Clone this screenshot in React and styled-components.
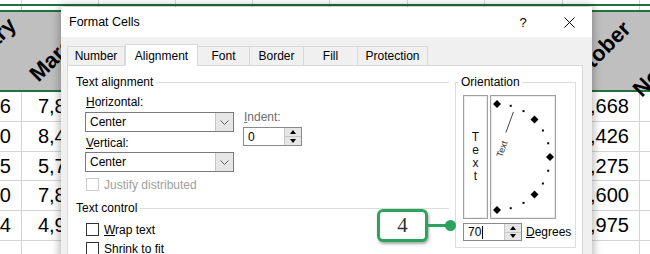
import React from 'react';
import styled, { createGlobalStyle } from 'styled-components';

const GRID = '#d4d4d4';
const GREEN = '#21703f';
const UI = '"Liberation Sans", Arial, sans-serif';

const Global = createGlobalStyle`
  html, body { margin: 0; padding: 0; }
  body {
    width: 650px; height: 254px; overflow: hidden; background: #fff;
    font-family: ${UI};
  }
`;

const Page = styled.div`
  position: relative;
  width: 650px;
  height: 254px;
  overflow: hidden;
`;

/* ---------- spreadsheet ---------- */
const Sheet = styled.div`
  display: flex;
  flex-direction: column;
  margin-left: -55px;
  width: 770px;
`;

const Row = styled.div`
  display: flex;
  height: ${(p) => p.h}px;
  flex: none;
  background: ${(p) => p.bg || '#fff'};
  border-bottom: ${(p) => (p.line ? `1px solid ${GRID}` : 'none')};
  box-sizing: border-box;
`;

const Rule = styled.div`
  height: 2px;
  flex: none;
  background: ${GREEN};
`;

const Cell = styled.div`
  width: ${(p) => p.w}px;
  flex: none;
  box-sizing: border-box;
  border-right: 1px solid ${GRID};
  display: flex;
  align-items: center;
  justify-content: flex-end;
  padding-right: 10px;
  font-family: ${UI};
  font-size: 20px;
  color: #000;
`;

const HeadCell = styled.div`
  width: ${(p) => p.w}px;
  flex: none;
  display: flex;
  align-items: center;
  justify-content: center;
  overflow: visible;
`;

const HeadLabel = styled.span`
  flex: none;
  white-space: nowrap;
  font-family: ${UI};
  font-weight: bold;
  font-size: 22px;
  line-height: 26px;
  color: #000;
  transform: translate(-4px, 4px) rotate(-45deg);
`;

const COLS = [
  { w: 77, head: 'February', vals: ['3,876', '5,410', '2,665', '4,320', '6,204'] },
  { w: 77, head: 'March', vals: ['7,868', '8,452', '5,731', '7,845', '4,993'] },
  { w: 77, head: 'April', vals: ['6,112', '7,204', '4,880', '6,530', '5,118'] },
  { w: 77, head: 'May', vals: ['5,420', '6,905', '3,770', '8,120', '4,415'] },
  { w: 77, head: 'June', vals: ['8,015', '5,330', '6,410', '7,225', '3,960'] },
  { w: 78, head: 'July', vals: ['6,740', '7,815', '5,095', '6,380', '4,540'] },
  { w: 77, head: 'August', vals: ['7,305', '6,120', '4,660', '8,410', '5,730'] },
  { w: 78, head: 'September', vals: ['5,980', '8,045', '6,225', '7,110', '4,305'] },
  { w: 77, head: 'October', vals: ['7,668', '8,426', '5,275', '7,600', '4,975'] },
  { w: 77, head: 'November', vals: ['', '', '', '', ''] },
];

const ROW_H = [30, 30, 29, 30, 30, 30];

function Spreadsheet() {
  return (
    <Sheet>
      <Row h={4}>
        {COLS.map((c, i) => (
          <Cell key={i} w={c.w} />
        ))}
      </Row>
      <Rule />
      <Row h={4}>
        {COLS.map((c, i) => (
          <Cell key={i} w={c.w} />
        ))}
      </Row>
      <Rule />
      <Row h={78} bg="#bfbfbf">
        {COLS.map((c, i) => (
          <HeadCell key={i} w={c.w}>
            <HeadLabel>{c.head}</HeadLabel>
          </HeadCell>
        ))}
      </Row>
      <Rule />
      {ROW_H.map((h, r) => (
        <Row key={r} h={h} line>
          {COLS.map((c, i) => (
            <Cell key={i} w={c.w}>
              {c.vals[r] || ''}
            </Cell>
          ))}
        </Row>
      ))}
    </Sheet>
  );
}

/* ---------- dialog ---------- */
const Dialog = styled.div`
  position: absolute;
  left: 61px;
  top: 7px;
  width: 531px;
  height: 262px;
  background: #f0f0f0;
  box-shadow: 0 0 9px 1px rgba(0, 0, 0, 0.32);
  display: flex;
  flex-direction: column;
  font-family: ${UI};
  font-size: 12px;
  color: #000;
`;

const TitleBar = styled.div`
  height: 30px;
  flex: none;
  background: #fff;
  display: flex;
  align-items: center;
`;

const Title = styled.div`
  flex: 1;
  padding-left: 8px;
  font-size: 12.5px;
`;

const TitleButton = styled.div`
  width: 46px;
  height: 30px;
  display: flex;
  align-items: center;
  justify-content: center;
  font-size: 13px;
`;

const Body = styled.div`
  flex: 1;
  display: flex;
  flex-direction: column;
  padding: 7px 9px 0 6px;
`;

const Tabs = styled.div`
  display: flex;
  align-items: flex-end;
  height: 21px;
  flex: none;
  position: relative;
  z-index: 1;
`;

const Tab = styled.div`
  width: ${(p) => p.w}px;
  height: ${(p) => (p.active ? 22 : 19)}px;
  margin-bottom: ${(p) => (p.active ? -1 : 0)}px;
  box-sizing: border-box;
  display: flex;
  align-items: center;
  justify-content: center;
  background: ${(p) => (p.active ? '#fff' : '#f0f0f0')};
  border: 1px solid #d9d9d9;
  border-bottom: none;
  border-left: ${(p) => (p.first || p.active ? '1px solid #d9d9d9' : 'none')};
  font-size: 12px;
`;

const Panel = styled.div`
  flex: 1;
  background: #fff;
  border: 1px solid #d9d9d9;
  display: grid;
  grid-template-columns: 373px 121px;
  column-gap: 6px;
  align-items: start;
  padding: 9px 6px 0 8px;
`;

const LeftCol = styled.div`
  display: flex;
  flex-direction: column;
`;

const GroupHeader = styled.div`
  display: flex;
  align-items: center;
  height: 14px;
  margin-top: ${(p) => p.mt || 0}px;
  &::after {
    content: '';
    flex: 1;
    height: 1px;
    margin-left: 3px;
    background: #dcdcdc;
  }
`;

const AlignBlock = styled.div`
  display: flex;
  gap: 9px;
  margin-left: 9px;
`;

const FieldCol = styled.div`
  display: flex;
  flex-direction: column;
  padding-top: ${(p) => p.pt || 0}px;
`;

const Label = styled.div`
  height: 14px;
  line-height: 14px;
  margin-top: ${(p) => p.mt || 0}px;
  padding-left: 1px;
  color: ${(p) => (p.disabled ? '#6d6d6d' : '#000')};
`;

const Select = styled.div`
  width: 149px;
  height: 20px;
  margin-top: ${(p) => p.mt || 0}px;
  box-sizing: border-box;
  border: 1px solid #7a7a7a;
  background: #fff;
  display: flex;
`;

const SelectValue = styled.div`
  flex: 1;
  padding-left: 4px;
  display: flex;
  align-items: center;
`;

const SelectButton = styled.div`
  width: 17px;
  background: #e6e6e6;
  border-left: 1px solid #c6c6c6;
  display: flex;
  align-items: center;
  justify-content: center;
`;

const Spin = styled.div`
  width: ${(p) => p.w}px;
  height: ${(p) => p.h}px;
  margin-top: ${(p) => p.mt || 0}px;
  box-sizing: border-box;
  border: 1px solid #8a8a8a;
  background: #fff;
  display: flex;
  flex: none;
`;

const SpinValue = styled.div`
  flex: 1;
  padding-left: 4px;
  display: flex;
  align-items: center;
`;

const Caret = styled.span`
  display: inline-block;
  width: 1px;
  height: 13px;
  background: #000;
  margin-left: 1px;
`;

const SpinButtons = styled.div`
  width: 16px;
  display: flex;
  flex-direction: column;
  border-left: 1px solid #c6c6c6;
`;

const SpinButton = styled.div`
  flex: 1;
  background: #e6e6e6;
  display: flex;
  align-items: center;
  justify-content: center;
  & + & {
    border-top: 1px solid #c6c6c6;
  }
  &::before {
    content: '';
    border-left: 3.5px solid transparent;
    border-right: 3.5px solid transparent;
    ${(p) => (p.down ? 'border-top: 4px solid #000;' : 'border-bottom: 4px solid #000;')}
  }
`;

const CheckRow = styled.div`
  display: flex;
  align-items: center;
  gap: 5px;
  height: 13px;
  margin-top: ${(p) => p.mt || 0}px;
  margin-left: 10px;
  color: ${(p) => (p.disabled ? '#a0a0a0' : '#000')};
`;

const Box = styled.span`
  width: 13px;
  height: 13px;
  box-sizing: border-box;
  border: 1px solid ${(p) => (p.disabled ? '#cccccc' : '#333')};
  background: #fff;
  flex: none;
`;

const Orientation = styled.fieldset`
  margin: 0;
  padding: 0 7px 6px 7px;
  border: 1px solid #dcdcdc;
  min-width: 0;
  display: flex;
  flex-direction: column;
`;

const Legend = styled.legend`
  padding: 0 2px;
  margin-left: -4px;
  height: 14px;
  line-height: 14px;
  font-size: 12px;
`;

const DialRow = styled.div`
  display: flex;
  gap: 2px;
  margin-top: 6px;
`;

const VerticalText = styled.div`
  width: 25px;
  height: 124px;
  box-sizing: border-box;
  border: 1px solid #a0a0a0;
  box-shadow: inset 0 0 0 1px #ececec;
  display: flex;
  flex-direction: column;
  align-items: center;
  justify-content: center;
  line-height: 13px;
  color: #111;
`;

const DialBox = styled.div`
  width: 66px;
  height: 124px;
  box-sizing: border-box;
  border: 1px solid #a0a0a0;
  box-shadow: inset 0 0 0 1px #ececec;
  display: flex;
`;

const DegreesRow = styled.div`
  display: flex;
  align-items: center;
  gap: 4px;
  margin-top: 4px;
`;

/* ---------- callout ---------- */
const Callout = styled.div`
  position: absolute;
  left: 377px;
  top: 209px;
  display: flex;
  align-items: center;
`;

const CalloutBox = styled.div`
  width: 51px;
  height: 33px;
  box-sizing: border-box;
  border: 3px solid #2ba35c;
  border-radius: 6px;
  background: #fff;
  box-shadow: 1px 2px 3px rgba(0, 0, 0, 0.35);
  display: flex;
  align-items: center;
  justify-content: center;
  font-family: "Liberation Serif", "Times New Roman", serif;
  font-size: 21px;
  color: #333;
`;

const Connector = styled.div`
  width: 20px;
  height: 3px;
  background: #2ba35c;
`;

const Dot = styled.div`
  width: 11px;
  height: 11px;
  border-radius: 50%;
  background: #2ba35c;
  margin-left: -3px;
`;

function Chevron() {
  return (
    <svg width="9" height="5" viewBox="0 0 9 5">
      <polyline points="0.5,0.5 4.5,4.5 8.5,0.5" fill="none" stroke="#606060" strokeWidth="1" />
    </svg>
  );
}

function CloseIcon() {
  return (
    <svg width="11" height="11" viewBox="0 0 11 11">
      <path d="M0.5 0.5 L10.5 10.5 M10.5 0.5 L0.5 10.5" stroke="#000" strokeWidth="1" />
    </svg>
  );
}

function Dial() {
  const cx = 6;
  const cy = 61;
  const r = 53;
  const marks = [];
  for (let a = 90; a >= -90; a -= 15) {
    const rad = (a * Math.PI) / 180;
    const x = cx + r * Math.cos(rad);
    const y = cy - r * Math.sin(rad);
    if (a % 45 === 0) {
      marks.push(
        <polygon
          key={a}
          points={`${x},${y - 4} ${x + 4},${y} ${x},${y + 4} ${x - 4},${y}`}
          fill="#000"
        />
      );
    } else {
      marks.push(<rect key={a} x={x - 1} y={y - 1} width="2" height="2" fill="#000" />);
    }
  }
  const ang = (70 * Math.PI) / 180;
  const dx = Math.cos(ang);
  const dy = -Math.sin(ang);
  const p = (d) => [cx + dx * d, cy + dy * d];
  const [x1, y1] = p(26);
  const [x2, y2] = p(48);
  const tx = cx + dx * 1 + 5 * Math.sin(ang);
  const ty = cy + dy * 1 + 5 * Math.cos(ang);
  return (
    <svg width="64" height="122" viewBox="0 0 64 122">
      {marks}
      <line x1={x1} y1={y1} x2={x2} y2={y2} stroke="#444" strokeWidth="1" />
      <text
        x={tx}
        y={ty}
        fontSize="9"
        fontFamily={UI}
        fill="#222"
        transform={`rotate(-70 ${tx} ${ty})`}
      >
        Text
      </text>
    </svg>
  );
}

const TABS = [
  { label: 'Number', w: 58 },
  { label: 'Alignment', w: 73, active: true },
  { label: 'Font', w: 52 },
  { label: 'Border', w: 54 },
  { label: 'Fill', w: 54 },
  { label: 'Protection', w: 70 },
];

function FormatCells() {
  return (
    <Dialog>
      <TitleBar>
        <Title>Format Cells</Title>
        <TitleButton>?</TitleButton>
        <TitleButton>
          <CloseIcon />
        </TitleButton>
      </TitleBar>
      <Body>
        <Tabs>
          {TABS.map((t, i) => (
            <Tab key={t.label} w={t.w} active={t.active} first={i === 0}>
              {t.label}
            </Tab>
          ))}
        </Tabs>
        <Panel>
          <LeftCol>
            <GroupHeader>Text alignment</GroupHeader>
            <AlignBlock>
              <FieldCol>
                <Label mt={6}>
                  <u>H</u>orizontal:
                </Label>
                <Select mt={3}>
                  <SelectValue>Center</SelectValue>
                  <SelectButton>
                    <Chevron />
                  </SelectButton>
                </Select>
                <Label mt={4}>
                  <u>V</u>ertical:
                </Label>
                <Select mt={2}>
                  <SelectValue>Center</SelectValue>
                  <SelectButton>
                    <Chevron />
                  </SelectButton>
                </Select>
              </FieldCol>
              <FieldCol pt={21}>
                <Label disabled>
                  <u>I</u>ndent:
                </Label>
                <Spin w={59} h={19} mt={3}>
                  <SpinValue>0</SpinValue>
                  <SpinButtons>
                    <SpinButton />
                    <SpinButton down />
                  </SpinButtons>
                </Spin>
              </FieldCol>
            </AlignBlock>
            <CheckRow mt={6} disabled>
              <Box disabled />
              Justify distributed
            </CheckRow>
            <GroupHeader mt={10}>Text control</GroupHeader>
            <CheckRow mt={8}>
              <Box />
              <span>
                <u>W</u>rap text
              </span>
            </CheckRow>
            <CheckRow mt={6}>
              <Box />
              <span>
                Shrin<u>k</u> to fit
              </span>
            </CheckRow>
          </LeftCol>
          <Orientation>
            <Legend>Orientation</Legend>
            <DialRow>
              <VerticalText>
                <span>T</span>
                <span>e</span>
                <span>x</span>
                <span>t</span>
              </VerticalText>
              <DialBox>
                <Dial />
              </DialBox>
            </DialRow>
            <DegreesRow>
              <Spin w={59} h={18}>
                <SpinValue>
                  70
                  <Caret />
                </SpinValue>
                <SpinButtons>
                  <SpinButton />
                  <SpinButton down />
                </SpinButtons>
              </Spin>
              <span>
                <u>D</u>egrees
              </span>
            </DegreesRow>
          </Orientation>
        </Panel>
      </Body>
    </Dialog>
  );
}

export default function App() {
  return (
    <Page>
      <Global />
      <Spreadsheet />
      <FormatCells />
      <Callout>
        <CalloutBox>4</CalloutBox>
        <Connector />
        <Dot />
      </Callout>
    </Page>
  );
}
